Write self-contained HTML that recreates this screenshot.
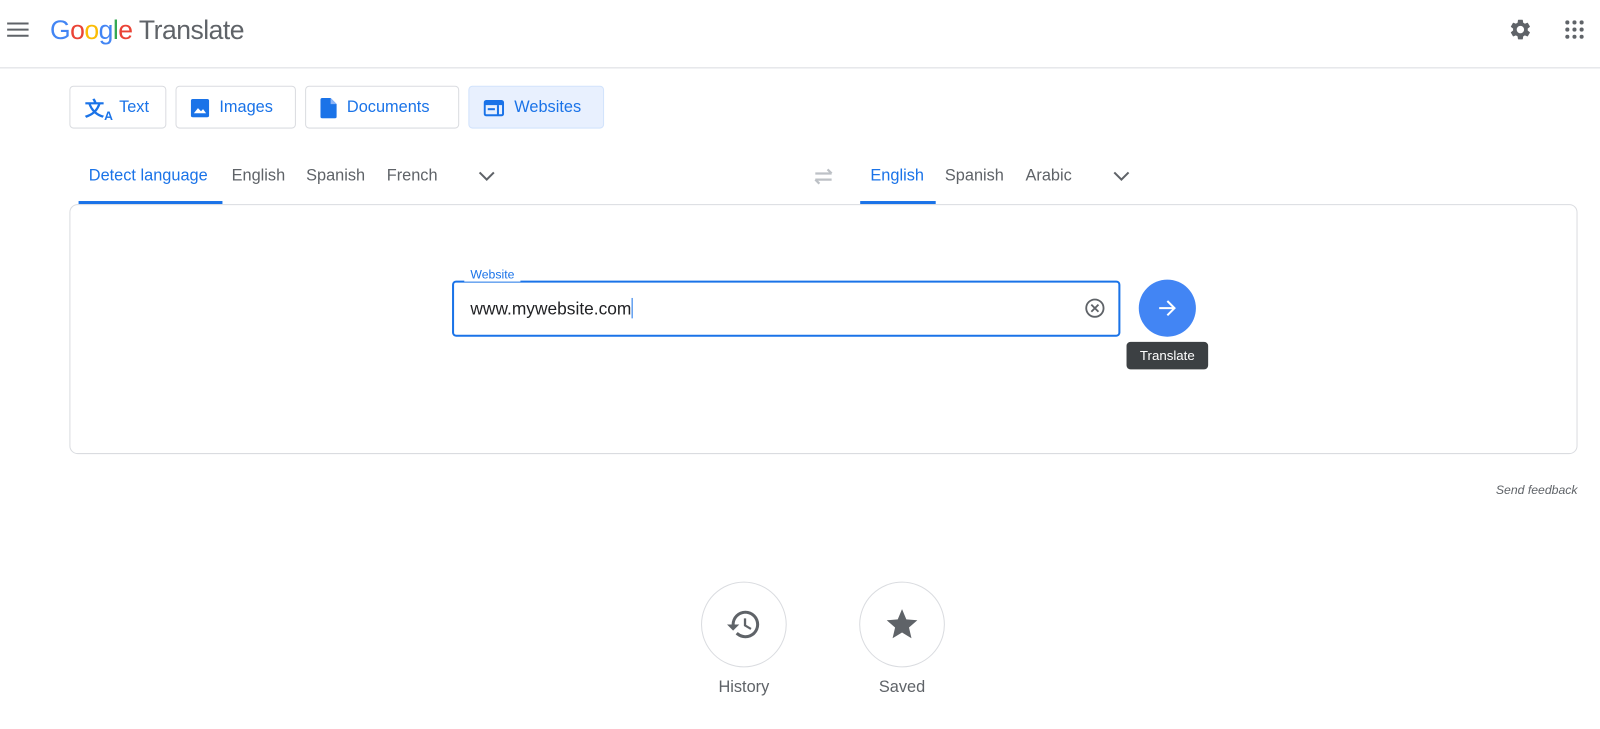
<!DOCTYPE html>
<html><head><meta charset="utf-8"><style>
*{box-sizing:border-box;margin:0;padding:0}
body{width:1600px;height:728px;background:#fff;font-family:"Liberation Sans",Arial,sans-serif;position:relative;overflow:hidden;color:#5f6368}
#w{position:absolute;left:0;top:0;width:1568px;height:714px;transform:scale(1.0204);transform-origin:0 0}
.a{position:absolute}
.hdr{left:0;top:66px;width:1568px;height:1px;background:#dadce0}
.tab{position:absolute;top:84px;height:42px;border:1px solid #dadce0;border-radius:4px;display:flex;align-items:center;padding-left:14px;padding-top:2px;color:#1a73e8;font-size:16px;gap:10px}
.lang{position:absolute;top:164px;font-size:16px;color:#5f6368}
.circ{position:absolute;width:84px;height:84px;border:1px solid #dadce0;border-radius:50%;display:flex;align-items:center;justify-content:center}
.lbl{position:absolute;font-size:16px;color:#5f6368;text-align:center;width:100px}
</style></head><body><div id="w">
<svg class="a" style="left:6px;top:20px" width="24" height="18" viewBox="0 0 24 18"><path d="M1 3h21M1 9h21M1 15h21" stroke="#5f6368" stroke-width="2"/></svg>
<div class="a" style="left:49px;top:14px;font-size:26px;letter-spacing:-0.5px"><span style="color:#4285f4">G</span><span style="color:#ea4335">o</span><span style="color:#fbbc05">o</span><span style="color:#4285f4">g</span><span style="color:#34a853">l</span><span style="color:#ea4335">e</span> <span style="color:#5f6368">Translate</span></div>
<svg class="a" style="left:1478px;top:17px" width="24" height="24" viewBox="0 0 24 24"><path fill="#5f6368" d="M19.14 12.94c.04-.3.06-.61.06-.94 0-.32-.02-.64-.07-.94l2.030-1.58a.49.49 0 0 0 .12-.61l-1.920-3.32a.488.488 0 0 0-.59-.22l-2.39.96c-.5-.38-1.03-.7-1.62-.94l-.36-2.54a.484.484 0 0 0-.48-.41h-3.84c-.24 0-.43.17-.47.41l-.36 2.54c-.59.24-1.130.57-1.62.94l-2.39-.96c-.22-.08-.47 0-.59.22L2.74 8.87c-.12.21-.08.47.12.61l2.03 1.58c-.05.3-.09.63-.09.94s.02.64.07.94l-2.03 1.58a.49.49 0 0 0-.12.61l1.92 3.32c.12.22.37.29.59.22l2.39-.96c.5.38 1.03.7 1.62.94l.36 2.54c.05.24.24.41.48.41h3.84c.24 0 .44-.17.47-.41l.36-2.54c.59-.24 1.13-.56 1.62-.94l2.39.96c.22.08.47 0 .59-.22l1.92-3.32c.12-.22.07-.47-.12-.61l-2.01-1.58zM12 15.6c-1.98 0-3.6-1.62-3.6-3.6s1.62-3.6 3.6-3.6 3.6 1.62 3.6 3.6-1.62 3.6-3.6 3.6z"/></svg>
<svg class="a" style="left:1533px;top:19px" width="20" height="20" viewBox="0 0 20 20" fill="#5f6368"><circle cx="3" cy="3" r="2"/><circle cx="10" cy="3" r="2"/><circle cx="17" cy="3" r="2"/><circle cx="3" cy="10" r="2"/><circle cx="10" cy="10" r="2"/><circle cx="17" cy="10" r="2"/><circle cx="3" cy="17" r="2"/><circle cx="10" cy="17" r="2"/><circle cx="17" cy="17" r="2"/></svg>
<div class="a hdr"></div>

<div class="tab" style="left:68px;width:95px"><span style="font-size:19px;font-weight:bold">文<sub style="font-size:12px">A</sub></span><span style="margin-left:-4px">Text</span></div>
<div class="tab" style="left:172px;width:118px"><svg width="18" height="18" viewBox="0 0 18 18"><rect width="18" height="18" rx="2" fill="#1a73e8"/><path d="M3 14l4-5 3 3 2-2 3 4z" fill="#fff"/></svg>Images</div>
<div class="tab" style="left:299px;width:151px"><svg width="16" height="20" viewBox="0 0 16 20"><path d="M2 0h8l6 6v12a2 2 0 0 1-2 2H2a2 2 0 0 1-2-2V2a2 2 0 0 1 2-2z" fill="#1a73e8"/><path d="M10 0v6h6" fill="#8ab4f8"/></svg>Documents</div>
<div class="tab" style="left:459px;width:133px;background:#e8f0fe;border-color:#d2e3fc"><svg width="20" height="16" viewBox="0 0 20 16"><rect x="1" y="1" width="18" height="14" rx="1.5" fill="none" stroke="#1a73e8" stroke-width="2"/><rect x="1" y="1" width="18" height="4" fill="#1a73e8"/><rect x="13" y="5" width="2" height="10" fill="#1a73e8"/><rect x="4" y="8" width="7" height="2" fill="#1a73e8"/></svg>Websites</div>

<div class="lang" style="left:87px;color:#1a73e8">Detect language</div>
<div class="a" style="left:77px;top:197px;width:141px;height:3px;background:#1a73e8"></div>
<div class="lang" style="left:227px">English</div>
<div class="lang" style="left:300px">Spanish</div>
<div class="lang" style="left:379px">French</div>
<svg class="a" style="left:468px;top:166px" width="18" height="12" viewBox="0 0 18 12"><path d="M2 3l7 7 7-7" fill="none" stroke="#5f6368" stroke-width="2"/></svg>
<svg class="a" style="left:795px;top:164px" width="24" height="18" viewBox="0 0 24 18"><path d="M4 6h16M16 2l4 4M20 12H4M8 16l-4-4" fill="none" stroke="#bdc1c6" stroke-width="2.2"/></svg>
<div class="lang" style="left:853px;color:#1a73e8">English</div>
<div class="a" style="left:843px;top:197px;width:74px;height:3px;background:#1a73e8"></div>
<div class="lang" style="left:926px">Spanish</div>
<div class="lang" style="left:1005px">Arabic</div>
<svg class="a" style="left:1090px;top:166px" width="18" height="12" viewBox="0 0 18 12"><path d="M2 3l7 7 7-7" fill="none" stroke="#5f6368" stroke-width="2"/></svg>

<div class="a" style="left:68px;top:200px;width:1478px;height:245px;border:1px solid #dadce0;border-radius:8px"></div>
<div class="a" style="left:443px;top:275px;width:655px;height:55px;border:2px solid #1a73e8;border-radius:4px"></div>
<div class="a" style="left:455px;top:262px;padding:0 6px;background:#fff;color:#1a73e8;font-size:12px">Website</div>
<div class="a" style="left:461px;top:292px;font-size:17px;color:#202124">www.mywebsite.com<span style="display:inline-block;width:1px;height:20px;background:#1a73e8;vertical-align:-4px"></span></div>
<svg class="a" style="left:1062px;top:291px" width="22" height="22" viewBox="0 0 22 22"><circle cx="11" cy="11" r="8.5" fill="none" stroke="#5f6368" stroke-width="1.8"/><path d="M7.5 7.5l7 7M14.5 7.5l-7 7" stroke="#5f6368" stroke-width="1.8"/></svg>
<div class="a" style="left:1116px;top:274px;width:56px;height:56px;border-radius:50%;background:#4285f4"></div>
<svg class="a" style="left:1132px;top:290px" width="24" height="24" viewBox="0 0 24 24"><path d="M4 12h15M12 5l7 7-7 7" fill="none" stroke="#fff" stroke-width="2"/></svg>
<div class="a" style="left:1104px;top:335px;width:80px;height:27px;background:#3c4043;border-radius:4px;color:#fff;font-size:13px;text-align:center;line-height:27px">Translate</div>

<div class="a" style="right:22px;top:473px;font-size:12px;font-style:italic;color:#5f6368">Send feedback</div>

<div class="circ" style="left:687px;top:570px"><svg width="36" height="36" viewBox="0 0 24 24"><path fill="#5f6368" d="M13 3a9 9 0 0 0-9 9H1l3.89 3.89.07.14L9 12H6c0-3.87 3.13-7 7-7s7 3.130 7 7-3.13 7-7 7c-1.93 0-3.68-.79-4.94-2.06l-1.42 1.42A8.954 8.954 0 0 0 13 21a9 9 0 0 0 0-18zm-1 5v5l4.28 2.54.72-1.21-3.5-2.08V8H12z"/></svg></div>
<div class="circ" style="left:842px;top:570px"><svg width="36" height="36" viewBox="0 0 24 24"><path fill="#5f6368" d="M12 17.27L18.18 21l-1.64-7.03L22 9.24l-7.19-.61L12 2 9.19 8.63 2 9.24l5.46 4.73L5.82 21z"/></svg></div>
<div class="lbl" style="left:679px;top:665px">History</div>
<div class="lbl" style="left:834px;top:665px">Saved</div>
</div></body></html>
